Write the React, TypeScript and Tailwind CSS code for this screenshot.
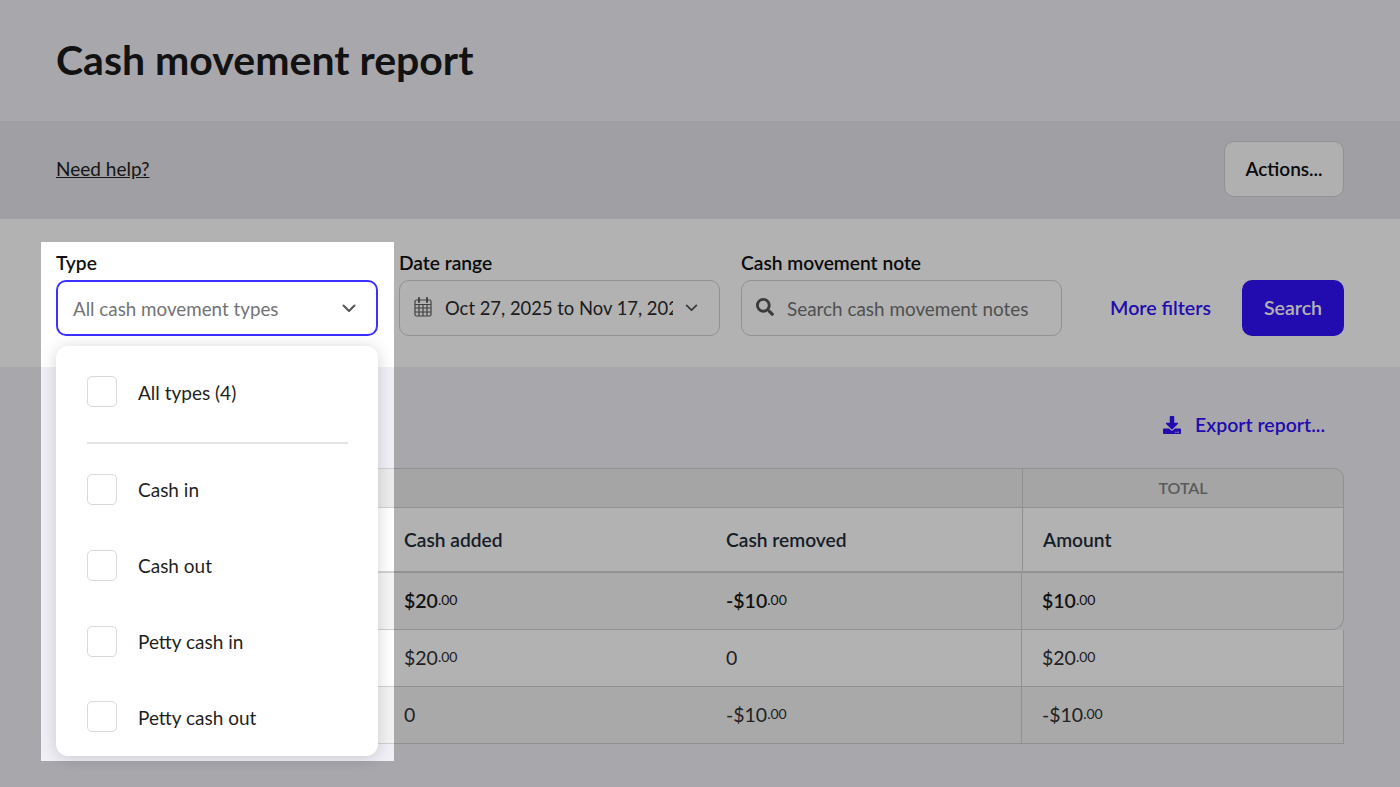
import { FaDownload, FaSearch } from "react-icons/fa";

const Chevron = ({ className }: { className: string }) => (
  <svg viewBox="0 0 14 9" className={className} fill="none" stroke="currentColor" strokeWidth="2" strokeLinecap="round" strokeLinejoin="round">
    <path d="M1.5 1.5 7 7l5.5-5.5" />
  </svg>
);

const Calendar = () => (
  <svg viewBox="0 0 18 20" className="w-[18px] h-[20px] mb-[3px] text-[#5f5f62]" fill="none" stroke="currentColor" strokeWidth="1.2">
    <rect x="1" y="3" width="16" height="16" rx="1.5" />
    <path d="M1 7.5h16M1 11h16M1 15h16M5 7.5V19M9 7.5V19M13 7.5V19" />
    <path d="M5 1v4M13 1v4" strokeWidth="2" strokeLinecap="round" />
  </svg>
);

const Check = ({ label }: { label: string }) => (
  <div className="flex items-center gap-[21px] h-[75.75px] pl-[31px]">
    <span className="w-[30px] h-[31px] rounded-[5px] border border-[#d9d9dc] bg-white" />
    <span className="text-[19px] text-[#1f1f1f] pt-[2px]">{label}</span>
  </div>
);

const Money = ({ v, bold }: { v: string; bold?: boolean }) => (
  <span className={bold ? "text-[19.5px] font-semibold text-[#1a1a1a]" : "text-[19.5px] text-[#303033]"}>
    {v}
    <span className={bold ? "text-[14px] font-normal align-[3px]" : "text-[14px] align-[3px]"}>.00</span>
  </span>
);

const Row = ({ a, b, c, bg, bold }: { a: any; b: any; c: any; bg: string; bold?: boolean }) => (
  <div className={`grid grid-cols-[327px_322px_316px_1fr] h-[57px] border-b border-[#d0d0d2] ${bg} ${bold ? "rounded-br-[12px] border-r" : ""}`}>
    <div />
    <div className="flex items-center pl-[21px]">{a}</div>
    <div className="flex items-center pl-[21px]">{b}</div>
    <div className="flex items-center pl-[20px] border-l border-[#d0d0d2]">{c}</div>
  </div>
);

export default function App() {
  return (
    <div className="relative w-[1400px] h-[787px] overflow-hidden bg-[#f1f0f7] font-['Lato','Noto_Sans',sans-serif] text-[#111]">
      <div className="h-[121px] px-[56px] pb-[2px] flex items-center">
        <h1 className="text-[41px] font-bold leading-none text-[#1a1a1c]">Cash movement report</h1>
      </div>

      <div className="h-[98px] bg-[#e5e4ea] px-[56px] pb-[2px] flex items-center justify-between">
        <a className="text-[19px] underline text-[#222]">Need help?</a>
        <button className="w-[120px] h-[56px] rounded-[10px] border border-[#d0d0d4] bg-[#fcfcfc] text-[19px] font-semibold">Actions...</button>
      </div>

      <div className="h-[148px] bg-white px-[56px] flex items-start pt-[30px]">
        <div className="w-[322px]">
          <div className="h-[31px] text-[19.2px] font-semibold">Type</div>
          <div className="h-[56px] rounded-[10px] border-2 border-[#3a30ff] bg-white flex items-center justify-between pl-[15px] pr-[20px]">
            <span className="text-[18.8px] text-[#737375] pt-[2px]">All cash movement types</span>
            <Chevron className="w-[14px] h-[9px] text-[#555]" />
          </div>
        </div>
        <div className="w-[321px] ml-[21px]">
          <div className="h-[31px] text-[19.2px] font-semibold">Date range</div>
          <div className="h-[56px] rounded-[10px] border border-[#d0d0d4] flex items-center pl-[14px] pr-[21px]">
            <Calendar />
            <span className="ml-[13px] w-[228px] overflow-hidden whitespace-nowrap text-[18.4px] text-[#2a2a2c] pt-[2px]">Oct 27, 2025 to Nov 17, 2025</span>
            <Chevron className="ml-auto w-[13px] h-[8px] text-[#555]" />
          </div>
        </div>
        <div className="w-[321px] ml-[21px]">
          <div className="h-[31px] text-[19.2px] font-semibold">Cash movement note</div>
          <div className="h-[56px] rounded-[10px] border border-[#d0d0d4] flex items-center pl-[14px]">
            <FaSearch className="w-[18px] h-[18px] mb-[2px] text-[#55565a]" />
            <span className="ml-[13px] text-[18.9px] text-[#737375] pt-[2px]">Search cash movement notes</span>
          </div>
        </div>
        <div className="ml-auto h-[87px] flex items-end gap-[31px]">
          <a className="h-[56px] flex items-center text-[19.6px] font-semibold text-[#3110fb]">More filters</a>
          <button className="w-[102px] h-[56px] rounded-[10px] bg-[#3110fb] text-white text-[19.6px] font-semibold">Search</button>
        </div>
      </div>

      <div className="px-[56px]">
        <div className="h-[101px] flex items-start justify-end pt-[43px] pr-[19px]">
          <a className="flex items-center gap-[14px] text-[19.5px] font-semibold text-[#3110fb]">
            <FaDownload className="w-[18px] h-[18px]" />
            Export report...
          </a>
        </div>
        <div className="w-[1288px]">
          <div className="grid grid-cols-[965px_1fr] h-[40px] bg-[#ececec] border border-[#d0d0d2] rounded-t-[10px]">
            <div />
            <div className="flex items-center justify-center border-l border-[#d0d0d2] text-[16px] font-semibold text-[#828285]">TOTAL</div>
          </div>
          <div className="grid grid-cols-[327px_322px_316px_1fr] h-[65px] bg-white border-x border-b-2 border-[#d0d0d2] text-[19.2px] font-semibold text-[#1f2d3a]">
            <div />
            <div className="flex items-center pl-[20px] pt-[1px]">Cash added</div>
            <div className="flex items-center pl-[20px] pt-[1px]">Cash removed</div>
            <div className="flex items-center pl-[20px] pt-[1px] border-l border-[#d0d0d2]">Amount</div>
          </div>
          <Row bold bg="bg-[#f5f5f5]" a={<Money bold v="$20" />} b={<Money bold v="-$10" />} c={<Money bold v="$10" />} />
          <Row bg="bg-white border-r" a={<Money v="$20" />} b={<span className="text-[19.5px] text-[#303033]">0</span>} c={<Money v="$20" />} />
          <Row bg="bg-[#f3f3f3] border-r" a={<span className="text-[19.5px] text-[#303033]">0</span>} b={<Money v="-$10" />} c={<Money v="-$10" />} />
        </div>
      </div>

      <div className="absolute left-[56px] top-[346px] w-[322px] h-[410px] rounded-[12px] bg-white shadow-[0_2px_16px_rgba(60,60,70,0.22)]">
        <div className="pt-[8px]"><Check label="All types (4)" /></div>
        <div className="ml-[31px] mr-[30px] mt-[12px] mb-[8px] h-[2px] bg-[#e4e4e7]" />
        <Check label="Cash in" />
        <Check label="Cash out" />
        <Check label="Petty cash in" />
        <Check label="Petty cash out" />
      </div>

      <div className="absolute left-[41px] top-[242px] w-[353px] h-[519px] pointer-events-none shadow-[0_0_0_2000px_rgba(0,0,0,0.3)]" />
    </div>
  );
}
